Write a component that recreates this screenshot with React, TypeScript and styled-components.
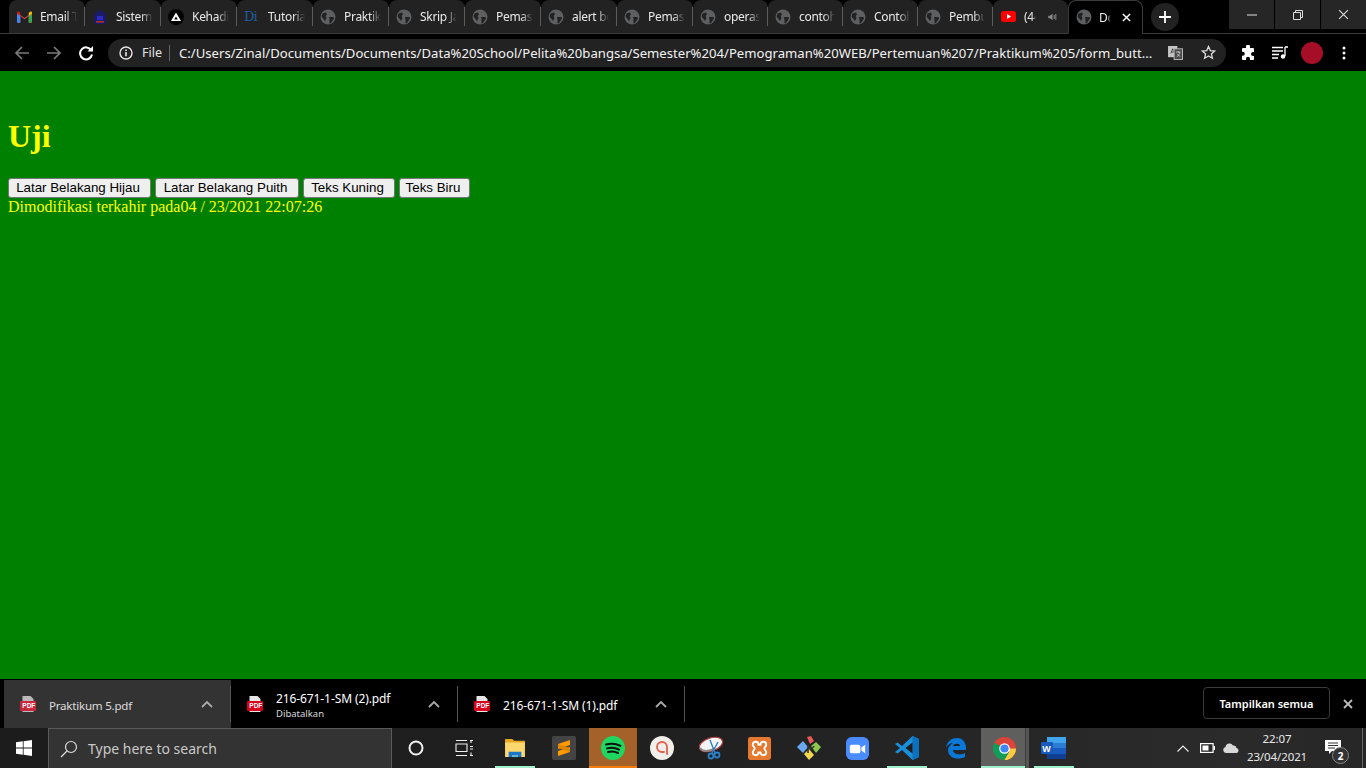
import React from "react";
import styled, { createGlobalStyle } from "styled-components";

const Global = createGlobalStyle`
  html, body { margin: 0; padding: 0; height: 100%; overflow: hidden; background: #000; }
  #root { height: 768px; }
  * { box-sizing: border-box; }
`;
const UI = `"Noto Sans", "Open Sans", "DejaVu Sans", sans-serif`;

const Screen = styled.div`
  width: 1366px; height: 768px; display: flex; flex-direction: column; font-family: ${UI}; color: #fff; overflow: hidden;
`;
const TabStrip = styled.div`
  height: 34px; flex: none; display: flex; align-items: flex-start; padding-left: 9px; background: #000;
  border-bottom: 1px solid #3a3a3a;
`;
const Tab = styled.div<{ $w: number; $active?: boolean }>`
  width: ${p => p.$w}px; height: ${p => (p.$active ? 34 : 33)}px; flex: none; display: flex; align-items: center; gap: ${p => (p.$active ? 7 : 8)}px;
  padding: 0 8px 0 7px; font-size: 12px; letter-spacing: -0.3px; color: #e8e8e8; white-space: nowrap;
  background: ${p => (p.$active ? "#000" : "#222")};
  border-radius: 8px 8px 0 0;
  border: ${p => (p.$active ? "1px solid #3a3a3a" : "none")};
  border-bottom: ${p => (p.$active ? "1px solid #000" : "none")};
`;
const TabDivider = styled.div`
  width: 1px; height: 19px; background: #5c5c5c; align-self: flex-start; margin: 7px 0 0 -1px; flex: none; z-index: 1;
`;
const TabTitle = styled.span`
  flex: 1; min-width: 0; overflow: hidden;
  -webkit-mask-image: linear-gradient(90deg, #000 68%, transparent 100%);
  mask-image: linear-gradient(90deg, #000 68%, transparent 100%);
`;
const Fav = styled.span`
  width: 16px; height: 16px; flex: none; display: flex; align-items: center; justify-content: center;
`;
const DFav = styled.span`
  width: 16px; font-family: "DejaVu Serif", serif; font-size: 13px; color: #1f5c9e; letter-spacing: -1px; overflow: hidden;
`;
const NewTab = styled.div`
  width: 28px; height: 28px; border-radius: 50%; background: #222; margin: 3px 0 0 8px; display: flex; align-items: center; justify-content: center; flex: none;
`;
const Spacer = styled.div`
  flex: 1;
`;
const WinControls = styled.div`
  display: flex; gap: 1px; height: 29px; flex: none;
`;
const WinBtn = styled.div`
  width: 45px; height: 29px; background: #262626; display: flex; align-items: center; justify-content: center;
`;
const Toolbar = styled.div`
  height: 37px; flex: none; display: flex; align-items: center; padding: 0 0 0 6px; background: #000;
`;
const NavBtn = styled.div`
  width: 32px; height: 28px; display: flex; align-items: center; justify-content: center; flex: none;
`;
const Omnibox = styled.div`
  width: 1118px; height: 28px; margin-left: 6px; border-radius: 14px; background: #222; display: flex; align-items: center; padding: 0 10px 0 11px; flex: none;
`;
const FileLabel = styled.span`
  margin-left: 9px; color: #e4e4e4; font-size: 12.5px;
`;
const OmniDivider = styled.span`
  width: 1px; height: 16px; background: #666; margin: 0 9px 0 7px; flex: none;
`;
const Url = styled.span`
  flex: 1; min-width: 0; color: #f2f2f2; white-space: nowrap; overflow: hidden; font-size: 13.13px;
`;
const OmniIcon = styled.span<{ $gap: number }>`
  width: 16px; height: 16px; margin-left: ${p => p.$gap}px; display: flex; align-items: center; justify-content: center; flex: none;
`;
const ToolIcons = styled.div`
  flex: 1; display: flex; align-items: center; padding-left: 14px;
`;
const ToolIcon = styled.div<{ $w: number }>`
  width: ${p => p.$w}px; height: 28px; display: flex; align-items: center; justify-content: center; flex: none;
`;
const Avatar = styled.div`
  width: 22px; height: 22px; border-radius: 50%; background: #a50e26; flex: none;
`;
const Page = styled.main`
  flex: 1; min-height: 0; background: #008000; color: #ff0; font-family: "Liberation Serif", "Times New Roman", serif; font-size: 16px; padding: 47px 8px 0;
`;
const Heading = styled.h1`
  font-size: 32px; font-weight: 700; line-height: 37px; margin: 0 0 23px;
`;
const ButtonRow = styled.div`
  display: flex; gap: 4px; height: 20px;
`;
const PageBtn = styled.button<{ $w: number }>`
  width: ${p => p.$w}px; height: 20px; padding: 0 3px 2px 0; font: 13.33px "Liberation Sans", Arial, sans-serif; color: #000;
  background: #efefef; border: 1px solid #767676; border-radius: 3px; flex: none;
`;
const Modified = styled.div`
  line-height: 18px;
`;
const Shelf = styled.div`
  height: 49px; flex: none; background: #000; border-top: 1px solid #000; display: flex; align-items: stretch; padding-left: 4px;
`;
const DownloadItem = styled.div<{ $hover?: boolean }>`
  width: 227px; flex: none; display: flex; align-items: center; padding-left: 16px;
  background: ${p => (p.$hover ? "#333" : "transparent")};
`;
const DownloadSep = styled.div`
  width: 1px; height: 36px; background: #555; align-self: center; margin-left: -1px; flex: none; z-index: 1;
`;
const DownloadText = styled.div`
  margin-left: 13px; padding-top: 2px; flex: 1; display: flex; flex-direction: column; min-width: 0;
`;
const FileName = styled.div<{ $dim?: boolean }>`
  font-size: ${p => (p.$dim ? 11.6 : 12)}px; line-height: 15px; letter-spacing: ${p => (p.$dim ? -0.25 : -0.1)}px; color: ${p => (p.$dim ? "#dcdcdc" : "#fff")}; white-space: nowrap;
`;
const FileStatus = styled.div`
  font-size: 9.5px; line-height: 13px; color: #d8d8d8; margin-top: 1px;
`;
const Chevron = styled.span`
  width: 14px; height: 14px; margin-right: 17px; flex: none; display: flex; align-items: center; justify-content: center;
`;
const ShowAll = styled.div`
  width: 127px; height: 32px; margin-bottom: 2px; border: 1px solid #3a3a3a; border-radius: 4px; display: flex; align-items: center; justify-content: center;
  font-size: 11px; font-weight: 600; color: #fff; align-self: center; flex: none;
`;
const ShelfClose = styled.div`
  width: 36px; display: flex; align-items: center; justify-content: center; flex: none;
`;
const Taskbar = styled.div`
  height: 40px; flex: none; display: flex; align-items: stretch; background: linear-gradient(90deg, #1c1c1c 0%, #202020 50%, #2b2b2b 90%, #262626 100%);
`;
const StartBtn = styled.div`
  width: 48px; flex: none; display: flex; align-items: center; justify-content: center;
`;
const SearchBox = styled.div`
  width: 344px; flex: none; background: #333; border: 1px solid #5a5a5a; border-bottom: none; display: flex; align-items: center; padding-left: 11px; font-size: 14px; color: #c9c9c9;
`;
const SearchText = styled.span`
  margin-left: 10px;
`;
const SysBtn = styled.div`
  width: 48px; flex: none; display: flex; align-items: center; justify-content: center;
`;
const AppStrip = styled.div`
  display: flex; margin-left: 2.5px; flex: none;
`;
const AppSlot = styled.div<{ $state?: "spotify" | "chrome" }>`
  width: 48px; margin-right: 1px; flex: none; display: flex; flex-direction: column; align-items: center;
  background: ${p => (p.$state === "spotify" ? "#a4612a" : p.$state === "chrome" ? "linear-gradient(90deg, #5f5f5d 44px, #3d3d3d 44px, #3d3d3d 45px, #555 45px)" : "transparent")};
`;
const AppIconBox = styled.div`
  flex: 1; display: flex; align-items: center; justify-content: center; padding-top: 2px;
`;
const AppMark = styled.div<{ $state?: "spotify" | "chrome"; $open?: boolean }>`
  height: 2px; flex: none; align-self: ${p => (p.$state === "chrome" ? "flex-start" : "center")};
  width: ${p => (p.$state === "spotify" ? 48 : p.$state === "chrome" ? 44 : 40)}px;
  background: ${p => (p.$state === "spotify" ? "#f57c0a" : p.$open ? "#a0f0cc" : "transparent")};
`;
const Tray = styled.div`
  margin-left: auto; display: flex; align-items: center; flex: none; height: 100%;
`;
const TrayIcon = styled.div<{ $w: number }>`
  width: ${p => p.$w}px; height: 40px; display: flex; align-items: center; justify-content: center; flex: none; position: relative;
`;
const Clock = styled.div`
  width: 68px; margin-right: 8px; flex: none; display: flex; flex-direction: column; align-items: center; font-size: 11.5px; line-height: 18px; color: #e8e8e8; letter-spacing: -0.1px;
`;
const Badge = styled.span`
  position: absolute; right: -2px; bottom: 4px; width: 17px; height: 17px; border-radius: 50%; background: #333; border: 1.5px solid #888; font-size: 10px; font-weight: 700; color: #fff; display: flex; align-items: center; justify-content: center;
`;
const DesktopEdge = styled.div`
  width: 4px; height: 100%; border-left: 1px solid #666; margin-left: 15px; flex: none;
`;
const WordLetter = styled.text`
  font-family: "Liberation Sans", Arial, sans-serif; font-weight: 700; font-size: 9px; fill: #fff;
`;
const PdfLabel = styled.text`
  font-family: "Liberation Sans", Arial, sans-serif; font-weight: 700; font-size: 6.5px; fill: #fff;
`;

const Globe = () => (
  <svg width="16" height="16" viewBox="0 0 16 16">
    <circle cx="8" cy="8" r="7.5" fill="#5e5f61" />
    <path d="M2.500 4.500 6 3.500 7 5.500 5.500 7 6.500 9 5 12 3.500 10 1.500 7.500ZM9 8h4.500l.5 1.500-3 4.500-1.500.5L9.500 11Z" fill="#222" />
  </svg>
);
const Gmail = () => (
  <svg width="15" height="12" viewBox="0 0 16 12">
    <path d="M0 1.500 8 7l8-5.500V11a1 1 0 0 1-1 1h-2.500V5L8 8.500 3.500 5v7H1a1 1 0 0 1-1-1Z" fill="#ea4335" />
    <path d="M0 1.500C0 .3 1.200-.3 2 .3L3.500 1.500V5L0 2.600Z" fill="#c5221f" />
    <path d="M12.500 5 16 2.600V11a1 1 0 0 1-1 1h-2.500Z" fill="#34a853" />
    <path d="M0 2.600 3.500 5v7H1a1 1 0 0 1-1-1Z" fill="#4285f4" />
    <path d="M12.500 1.500 14 .3c.8-.6 2 0 2 1.200v1.100L12.500 5Z" fill="#fbbc04" />
  </svg>
);
const Crest = () => (
  <svg width="14" height="16" viewBox="0 0 14 16">
    <path d="M7 0 9 3l3 1 1 7-1 4H2l-1-4 1-7 3-1Z" fill="#1a1a6e" />
    <path d="M4 7h6v4H4Z" fill="#2c2cc0" />
    <path d="M3 12h8v1.600H3Z" fill="#b03030" />
  </svg>
);
const Triangle = () => (
  <svg width="16" height="16" viewBox="0 0 16 16">
    <circle cx="8" cy="8" r="8" fill="#000" />
    <path d="M8 3.500 13 12H3Z" fill="#fff" />
    <path d="M8 7.500 9.800 10.500H6.200Z" fill="#000" />
  </svg>
);
const YouTube = () => (
  <svg width="15" height="11" viewBox="0 0 15 11">
    <rect width="15" height="11" rx="2.500" fill="#f00" />
    <path d="M6 3v5l4.200-2.500Z" fill="#fff" />
  </svg>
);
const Speaker = () => (
  <svg width="11" height="10" viewBox="0 0 12 12">
    <path d="M1 4.500h2L6 2v8L3 7.500H1Z" fill="#8a8a8a" />
    <path d="M8 3.500v5M10 2.500v7" stroke="#8a8a8a" strokeWidth="1.200" />
  </svg>
);
const CloseX = ({ size = 10, w = 1.6, c = "#fff" }: { size?: number; w?: number; c?: string }) => (
  <svg width={size} height={size} viewBox="0 0 10 10">
    <path d="M1 1l8 8M9 1l-8 8" stroke={c} strokeWidth={w} />
  </svg>
);
const Arrow = ({ dir, c }: { dir: "l" | "r"; c: string }) => (
  <svg width="16" height="16" viewBox="0 0 16 16" style={dir === "r" ? { transform: "scaleX(-1)" } : undefined}>
    <path d="M15 8H2M8 2 2 8l6 6" fill="none" stroke={c} strokeWidth="1.700" />
  </svg>
);
const Reload = () => (
  <svg width="16" height="16" viewBox="0 0 16 16">
    <path d="M13.200 5.200A6 6 0 1 0 14 9.500" fill="none" stroke="#fff" strokeWidth="2" />
    <path d="M9.500 6.500H15V1Z" fill="#fff" />
  </svg>
);
const Info = () => (
  <svg width="14" height="14" viewBox="0 0 14 14">
    <circle cx="7" cy="7" r="6" fill="none" stroke="#e6e6e6" strokeWidth="1.400" />
    <path d="M6.200 6h1.600v4.200H6.200ZM6.200 3.600h1.600v1.500H6.200Z" fill="#e6e6e6" />
  </svg>
);
const Translate = () => (
  <svg width="15" height="14" viewBox="0 0 16 15">
    <rect x="0" y="0" width="10" height="12" fill="#c4c4c4" />
    <path d="M3 8 5 3l2 5M3.800 6.500h2.400" fill="none" stroke="#444" strokeWidth="1" />
    <rect x="6.500" y="3" width="9" height="11.500" fill="#4a4a4a" stroke="#bdbdbd" />
    <path d="M8.500 6.500h5M11 5.500v1M9.500 11.500c2-1 2.800-3 3-5M10 8.500l3 3" fill="none" stroke="#d0d0d0" strokeWidth="0.900" />
  </svg>
);
const Star = () => (
  <svg width="15" height="15" viewBox="0 0 15 15">
    <path d="M7.500 1.500 9.300 5.600l4.400.4-3.300 2.900 1 4.300-3.900-2.300-3.900 2.300 1-4.300L1.300 6l4.400-.4Z" fill="none" stroke="#dcdcdc" strokeWidth="1.300" />
  </svg>
);
const Puzzle = () => (
  <svg width="16" height="16" viewBox="0 0 16 16">
    <path d="M6 1.500a2 2 0 0 1 4 0V3h3a1 1 0 0 1 1 1v3h-1a2 2 0 0 0 0 4h1v3a1 1 0 0 1-1 1h-3v-1.200a2 2 0 0 0-4 0V15H3a1 1 0 0 1-1-1v-3.300h.8a2 2 0 0 0 0-4H2V4a1 1 0 0 1 1-1h3Z" fill="#fff" />
  </svg>
);
const MediaQueue = () => (
  <svg width="16" height="14" viewBox="0 0 16 14">
    <path d="M0 1.500h11M0 5h11M0 8.500h7M0 12h6" stroke="#fff" strokeWidth="1.300" />
    <path d="M13 1v9" stroke="#fff" strokeWidth="1.300" />
    <path d="M13 1h3" stroke="#fff" strokeWidth="1.500" />
    <circle cx="11" cy="10.500" r="2.200" fill="#fff" />
  </svg>
);
const Kebab = () => (
  <svg width="4" height="14" viewBox="0 0 4 14">
    <circle cx="2" cy="2" r="1.500" fill="#fff" /><circle cx="2" cy="7" r="1.500" fill="#fff" /><circle cx="2" cy="12" r="1.500" fill="#fff" />
  </svg>
);
const PdfIcon = ({ dim }: { dim?: boolean }) => (
  <svg width="16" height="16" viewBox="0 0 16 16">
    <path d="M2.500 0h8l3 3v13h-11Z" fill={dim ? "#bbb" : "#e6e6e6"} />
    <rect x="0" y="5" width="16" height="10" rx="1" fill={dim ? "#c9283c" : "#d9001b"} />
    <PdfLabel x="2.300" y="12.300">PDF</PdfLabel>
  </svg>
);
const Up = () => (
  <svg width="12" height="8" viewBox="0 0 12 8">
    <path d="M1 7l5-5 5 5" fill="none" stroke="#aaa" strokeWidth="1.800" />
  </svg>
);
const WinLogo = () => (
  <svg width="16" height="16" viewBox="0 0 16 16">
    <path d="M0 2.300 6.800 1.300V7.600H0ZM7.600 1.200 16 0V7.600H7.600ZM0 8.400H6.800V14.700L0 13.700ZM7.600 8.400H16V16L7.600 14.800Z" fill="#fff" />
  </svg>
);
const SearchIcon = () => (
  <svg width="18" height="18" viewBox="0 0 18 18">
    <circle cx="11" cy="7" r="5.500" fill="none" stroke="#dcdcdc" strokeWidth="1.200" />
    <path d="M7 11 1 17" stroke="#dcdcdc" strokeWidth="1.300" />
  </svg>
);
const Cortana = () => (
  <svg width="16" height="16" viewBox="0 0 16 16">
    <circle cx="8" cy="8" r="6.500" fill="none" stroke="#f2f2f2" strokeWidth="2" />
  </svg>
);
const TaskView = () => (
  <svg width="18" height="16" viewBox="0 0 18 16">
    <path d="M1 .5h11M1 15.500h11M1 4h11v7.500H1Z" fill="none" stroke="#eee" strokeWidth="1.100" />
    <path d="M15 .5h3M15 15.500h3M16 0v3M16 12.500v3M15 6.500h3M15 9h3" stroke="#eee" strokeWidth="1.100" fill="none" />
  </svg>
);
const Explorer = () => (
  <svg width="22" height="19" viewBox="0 0 24 21">
    <path d="M1 0h8l2 2h12v4H1Z" fill="#e8a81c" />
    <path d="M1 4h22v15a1 1 0 0 1-1 1H2a1 1 0 0 1-1-1Z" fill="#fcd770" />
    <path d="M5 20v-6h14v6h-4v-2H9v2Z" fill="#1976c8" />
    <path d="M9 18h6v2H9Z" fill="#4fb0e8" />
  </svg>
);
const Sublime = () => (
  <svg width="24" height="24" viewBox="0 0 24 24">
    <rect width="24" height="24" rx="2" fill="#444" />
    <path d="M18 4v5L6 13V8ZM6 20v-5l12-4v5Z" fill="#ff9a00" />
    <path d="M6 8l12 4v4L6 12Z" fill="#e08600" />
  </svg>
);
const Spotify = () => (
  <svg width="24" height="24" viewBox="0 0 24 24">
    <circle cx="12" cy="12" r="12" fill="#1ed760" />
    <path d="M5 8.500c5-1.500 10-1 14.500 1.400M6 12.400c4.200-1.200 8.500-.8 12 1.200M7 16c3.500-.9 7-.6 10 1" fill="none" stroke="#111" strokeWidth="2" strokeLinecap="round" />
  </svg>
);
const AnyA = () => (
  <svg width="24" height="24" viewBox="0 0 24 24">
    <circle cx="12" cy="12" r="12" fill="#f2eeea" />
    <path d="M17 18v-7a5 5 0 1 0-5 5h2" fill="none" stroke="#e0604c" strokeWidth="1.800" strokeLinecap="round" />
  </svg>
);
const Snip = () => (
  <svg width="24" height="24" viewBox="0 0 24 24">
    <ellipse cx="12" cy="8.500" rx="12" ry="6.500" transform="rotate(-18 12 8.500)" fill="#f4f4f4" stroke="#b04040" strokeWidth="1.200" />
    <path d="M1 12c3 4 9 4 15 0" fill="none" stroke="#8a8a8a" strokeWidth="2" />
    <path d="M11 4l5 13M19 6l-6 11" stroke="#2c80c8" strokeWidth="1.400" />
    <circle cx="12" cy="20" r="2.500" fill="none" stroke="#2c80c8" strokeWidth="1.800" />
    <circle cx="18" cy="19" r="2.500" fill="none" stroke="#2c80c8" strokeWidth="1.800" />
  </svg>
);
const Xampp = () => (
  <svg width="23" height="23" viewBox="0 0 24 24">
    <rect width="24" height="24" rx="2.500" fill="#e4792f" />
    <path d="M8 5a3 3 0 0 0-3 3c0 2 2 2.500 2 4s-2 2-2 4a3 3 0 0 0 6 0h2a3 3 0 0 0 6 0c0-2-2-2.500-2-4s2-2 2-4a3 3 0 0 0-6 0h-2a3 3 0 0 0-3-3Z" fill="none" stroke="#fff" strokeWidth="2" />
  </svg>
);
const Kraken = () => (
  <svg width="24" height="24" viewBox="0 0 24 24">
    <path d="M0 11 6 5l5 6-5 6Z" fill="#6aa8f0" />
    <path d="M10 1 14 0l3 5-4 3Z" fill="#e85a5a" />
    <path d="M14 10l5-4 5 5-5 6Z" fill="#8cc84c" />
    <path d="M7 18l5-5 5 6-5 5Z" fill="#f2d850" />
    <path d="M11 9v8M11 12c3 1 5 0 6-2" stroke="#333" strokeWidth="1.600" fill="none" />
  </svg>
);
const ZoomApp = () => (
  <svg width="23" height="23" viewBox="0 0 24 24">
    <rect width="24" height="24" rx="6" fill="#4a8cff" />
    <rect x="4" y="8" width="11" height="9" rx="2" fill="#fff" />
    <path d="M16 11l4-3v9l-4-3Z" fill="#fff" />
  </svg>
);
const VSCode = () => (
  <svg width="24" height="24" viewBox="0 0 24 24">
    <path d="M17.500 0 24 3v18l-6.500 3L7 14l-4.500 3.500L0 16l5-4-5-4 2.500-1.500L7 10Z" fill="#1a8fdc" />
    <path d="M17.500 0 24 3v18l-6.500 3Z" fill="#0c70bc" />
    <path d="M17.500 6.500 10.500 12l7 5.500Z" fill="#1d1d1d" />
  </svg>
);
const Edge = () => (
  <svg width="22" height="22" viewBox="0 0 22 22">
    <path d="M1 11C2 4 7 1 12 1c6 0 9 5 9 10v2H8c0 4 7 6 12 3v4c-6 3-17 2-17-7 0-3 2-5 5-7-3 0-6 2-7 5Z" fill="#0a78d7" />
    <path d="M8 9h7c0-3-6-3-7 0Z" fill="#1d1d1d" />
  </svg>
);
const Chrome = () => (
  <svg width="23" height="23" viewBox="0 0 24 24">
    <circle cx="12" cy="12" r="12" fill="#db4437" />
    <path d="M12 12 1.600 6A12 12 0 0 0 12 24l5.200-9Z" fill="#0f9d58" />
    <path d="M12 12h12a12 12 0 0 1-12 12l5.200-9Z" fill="#ffcd40" />
    <circle cx="12" cy="12" r="5.500" fill="#fff" />
    <circle cx="12" cy="12" r="4.300" fill="#4285f4" />
  </svg>
);
const Word = () => (
  <svg width="25" height="24" viewBox="0 0 25 24">
    <rect x="6" y="1" width="19" height="22" rx="1" fill="#2b7cd3" />
    <rect x="6" y="1" width="19" height="6" fill="#41a5ee" />
    <rect x="6" y="12" width="19" height="6" fill="#185abd" />
    <rect x="6" y="18" width="19" height="5" fill="#103f91" />
    <rect x="0" y="6" width="12" height="12" rx="1" fill="#185abd" />
    <WordLetter x="1.200" y="15.500">W</WordLetter>
  </svg>
);
const Battery = () => (
  <svg width="15" height="10" viewBox="0 0 15 10">
    <rect x="0.600" y="0.600" width="12.500" height="8.800" fill="none" stroke="#fff" strokeWidth="1.200" />
    <rect x="2.500" y="2.500" width="6" height="5" fill="#fff" />
    <rect x="13.500" y="3" width="1.500" height="4" fill="#fff" />
  </svg>
);
const Cloud = () => (
  <svg width="16" height="10" viewBox="0 0 16 10">
    <path d="M3 10a3 3 0 0 1-.5-5.900A4 4 0 0 1 10 2.500a3 3 0 0 1 3.500 2.600A2.500 2.500 0 0 1 13.500 10Z" fill="#d8d8d8" />
  </svg>
);
const TrayUp = () => (
  <svg width="12" height="7" viewBox="0 0 12 7">
    <path d="M.5 6.500 6 1l5.500 5.500" fill="none" stroke="#eee" strokeWidth="1.100" />
  </svg>
);
const Note = () => (
  <svg width="16" height="15" viewBox="0 0 16 15" style={{ marginTop: -2 }}>
    <path d="M0 0h16v11H7l-3 3v-3H0Z" fill="#fff" />
    <path d="M3 3h10M3 5.500h10M3 8h7" stroke="#333" strokeWidth="1" />
  </svg>
);

type TabData = { t: string; w: number; icon?: React.ReactNode };
const tabs: TabData[] = [
  { t: "Email Tugas", w: 76, icon: <Gmail /> },
  { t: "Sistem Informasi", w: 76, icon: <Crest /> },
  { t: "Kehadiran", w: 76, icon: <Triangle /> },
  { t: "Tutorial", w: 76, icon: <DFav>Di</DFav> },
  { t: "Praktikum", w: 76 },
  { t: "Skrip Java", w: 76 },
  { t: "Pemasangan", w: 76 },
  { t: "alert box", w: 76 },
  { t: "Pemasangan", w: 76 },
  { t: "operasi", w: 75 },
  { t: "contoh", w: 75 },
  { t: "Contoh", w: 75 },
  { t: "Pembuatan", w: 75 },
];
const apps: { el: React.ReactNode; open?: boolean; state?: "spotify" | "chrome" }[] = [
  { el: <Explorer />, open: true },
  { el: <Sublime /> },
  { el: <Spotify />, state: "spotify" },
  { el: <AnyA /> },
  { el: <Snip /> },
  { el: <Xampp /> },
  { el: <Kraken /> },
  { el: <ZoomApp /> },
  { el: <VSCode />, open: true },
  { el: <Edge /> },
  { el: <Chrome />, open: true, state: "chrome" },
  { el: <Word />, open: true },
];

export default function App() {
  return (
    <Screen>
      <Global />
      <TabStrip>
        {tabs.map((tab, i) => (
          <React.Fragment key={i}>
            <Tab $w={tab.w}>
              <Fav>{tab.icon ?? <Globe />}</Fav>
              <TabTitle>{tab.t}</TabTitle>
            </Tab>
            <TabDivider />
          </React.Fragment>
        ))}
        <Tab $w={75}>
          <Fav><YouTube /></Fav>
          <TabTitle>(44) YouTube</TabTitle>
          <Fav><Speaker /></Fav>
        </Tab>
        <Tab $w={75} $active>
          <Fav><Globe /></Fav>
          <TabTitle>Document</TabTitle>
          <Fav><CloseX size={9} w={1.6} /></Fav>
        </Tab>
        <NewTab>
          <svg width="14" height="14" viewBox="0 0 14 14"><path d="M7 1v12M1 7h12" stroke="#fff" strokeWidth="1.800" /></svg>
        </NewTab>
        <Spacer />
        <WinControls>
          <WinBtn><svg width="10" height="2" viewBox="0 0 10 2"><path d="M0 1h10" stroke="#ddd" /></svg></WinBtn>
          <WinBtn>
            <svg width="10" height="10" viewBox="0 0 10 10"><path d="M.5 2.500h7v7h-7ZM2.500 2.500V.5h7v7h-2" fill="none" stroke="#ddd" /></svg>
          </WinBtn>
          <WinBtn><CloseX size={11} w={1} c="#ddd" /></WinBtn>
        </WinControls>
      </TabStrip>
      <Toolbar>
        <NavBtn><Arrow dir="l" c="#7a7a7a" /></NavBtn>
        <NavBtn><Arrow dir="r" c="#7a7a7a" /></NavBtn>
        <NavBtn><Reload /></NavBtn>
        <Omnibox>
          <Info />
          <FileLabel>File</FileLabel>
          <OmniDivider />
          <Url>C:/Users/Zinal/Documents/Documents/Data%20School/Pelita%20bangsa/Semester%204/Pemograman%20WEB/Pertemuan%207/Praktikum%205/form_butt...</Url>
          <OmniIcon $gap={10}><Translate /></OmniIcon>
          <OmniIcon $gap={17}><Star /></OmniIcon>
        </Omnibox>
        <ToolIcons>
          <ToolIcon $w={16}><Puzzle /></ToolIcon>
          <ToolIcon $w={48}><MediaQueue /></ToolIcon>
          <ToolIcon $w={16}><Avatar /></ToolIcon>
          <ToolIcon $w={48}><Kebab /></ToolIcon>
        </ToolIcons>
      </Toolbar>
      <Page>
        <Heading>Uji</Heading>
        <ButtonRow>
          <PageBtn $w={143}>Latar Belakang Hijau</PageBtn>
          <PageBtn $w={144}>Latar Belakang Puith</PageBtn>
          <PageBtn $w={92}>Teks Kuning</PageBtn>
          <PageBtn $w={71}>Teks Biru</PageBtn>
        </ButtonRow>
        <Modified>Dimodifikasi terkahir pada04 / 23/2021 22:07:26</Modified>
      </Page>
      <Shelf>
        <DownloadItem $hover>
          <PdfIcon dim />
          <DownloadText><FileName $dim>Praktikum 5.pdf</FileName></DownloadText>
          <Chevron><Up /></Chevron>
        </DownloadItem>
        <DownloadSep />
        <DownloadItem>
          <PdfIcon />
          <DownloadText>
            <FileName>216-671-1-SM (2).pdf</FileName>
            <FileStatus>Dibatalkan</FileStatus>
          </DownloadText>
          <Chevron><Up /></Chevron>
        </DownloadItem>
        <DownloadSep />
        <DownloadItem>
          <PdfIcon />
          <DownloadText><FileName>216-671-1-SM (1).pdf</FileName></DownloadText>
          <Chevron><Up /></Chevron>
        </DownloadItem>
        <DownloadSep />
        <Spacer />
        <ShowAll>Tampilkan semua</ShowAll>
        <ShelfClose><CloseX size={10} w={1.800} c="#bbb" /></ShelfClose>
      </Shelf>
      <Taskbar>
        <StartBtn><WinLogo /></StartBtn>
        <SearchBox><SearchIcon /><SearchText>Type here to search</SearchText></SearchBox>
        <SysBtn><Cortana /></SysBtn>
        <SysBtn><TaskView /></SysBtn>
        <AppStrip>
          {apps.map((a, i) => (
            <AppSlot key={i} $state={a.state}>
              <AppIconBox>{a.el}</AppIconBox>
              <AppMark $state={a.state} $open={a.open} />
            </AppSlot>
          ))}
        </AppStrip>
        <Tray>
          <TrayIcon $w={24}><TrayUp /></TrayIcon>
          <TrayIcon $w={24}><Battery /></TrayIcon>
          <TrayIcon $w={24}><Cloud /></TrayIcon>
          <Clock><span>22:07</span><span>23/04/2021</span></Clock>
          <TrayIcon $w={28}><Note /><Badge>2</Badge></TrayIcon>
          <DesktopEdge />
        </Tray>
      </Taskbar>
    </Screen>
  );
}
